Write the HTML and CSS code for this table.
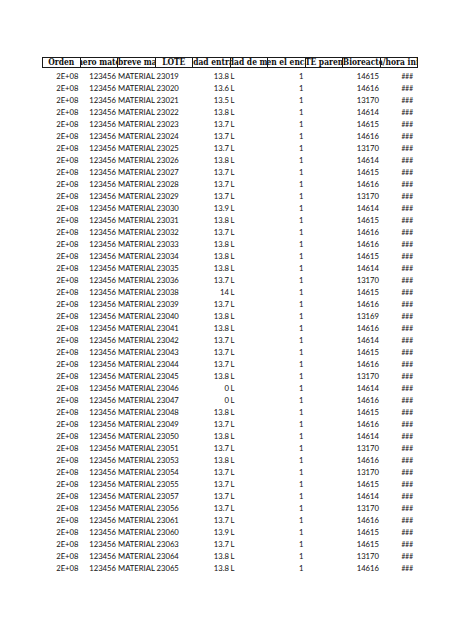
FILE: index.html
```html
<!DOCTYPE html>
<html lang="es">
<head>
<meta charset="utf-8">
<title>Lotes</title>
<link rel="stylesheet" href="styles.css">
</head>
<body>
<div class="sheet">
  <div class="head">
    <div class="hc"><span>Orden</span></div>
    <div class="hc"><span>Número material</span></div>
    <div class="hc"><span>Texto breve material</span></div>
    <div class="hc"><span>LOTE</span></div>
    <div class="hc"><span class="sl">Cantidad entrada</span></div>
    <div class="hc"><span class="sr1">Unidad de medida</span></div>
    <div class="hc"><span class="sl">Cantidad en el encabezado</span></div>
    <div class="hc"><span>LOTE parental</span></div>
    <div class="hc"><span class="sr">Bioreactor</span></div>
    <div class="hc"><span class="sl">Fecha/hora inicio</span></div>
  </div>
  <div class="body">
    <div class="row"><span class="r">2E+08</span><span class="r">123456</span><span class="l">MATERIAL</span><span class="lote">23019</span><span class="q">13.8</span><span class="u">L</span><span class="r">1</span><span></span><span class="b">14615</span><span class="h">###</span></div>
    <div class="row"><span class="r">2E+08</span><span class="r">123456</span><span class="l">MATERIAL</span><span class="lote">23020</span><span class="q">13.6</span><span class="u">L</span><span class="r">1</span><span></span><span class="b">14616</span><span class="h">###</span></div>
    <div class="row"><span class="r">2E+08</span><span class="r">123456</span><span class="l">MATERIAL</span><span class="lote">23021</span><span class="q">13.5</span><span class="u">L</span><span class="r">1</span><span></span><span class="b">13170</span><span class="h">###</span></div>
    <div class="row"><span class="r">2E+08</span><span class="r">123456</span><span class="l">MATERIAL</span><span class="lote">23022</span><span class="q">13.8</span><span class="u">L</span><span class="r">1</span><span></span><span class="b">14614</span><span class="h">###</span></div>
    <div class="row"><span class="r">2E+08</span><span class="r">123456</span><span class="l">MATERIAL</span><span class="lote">23023</span><span class="q">13.7</span><span class="u">L</span><span class="r">1</span><span></span><span class="b">14615</span><span class="h">###</span></div>
    <div class="row"><span class="r">2E+08</span><span class="r">123456</span><span class="l">MATERIAL</span><span class="lote">23024</span><span class="q">13.7</span><span class="u">L</span><span class="r">1</span><span></span><span class="b">14616</span><span class="h">###</span></div>
    <div class="row"><span class="r">2E+08</span><span class="r">123456</span><span class="l">MATERIAL</span><span class="lote">23025</span><span class="q">13.7</span><span class="u">L</span><span class="r">1</span><span></span><span class="b">13170</span><span class="h">###</span></div>
    <div class="row"><span class="r">2E+08</span><span class="r">123456</span><span class="l">MATERIAL</span><span class="lote">23026</span><span class="q">13.8</span><span class="u">L</span><span class="r">1</span><span></span><span class="b">14614</span><span class="h">###</span></div>
    <div class="row"><span class="r">2E+08</span><span class="r">123456</span><span class="l">MATERIAL</span><span class="lote">23027</span><span class="q">13.7</span><span class="u">L</span><span class="r">1</span><span></span><span class="b">14615</span><span class="h">###</span></div>
    <div class="row"><span class="r">2E+08</span><span class="r">123456</span><span class="l">MATERIAL</span><span class="lote">23028</span><span class="q">13.7</span><span class="u">L</span><span class="r">1</span><span></span><span class="b">14616</span><span class="h">###</span></div>
    <div class="row"><span class="r">2E+08</span><span class="r">123456</span><span class="l">MATERIAL</span><span class="lote">23029</span><span class="q">13.7</span><span class="u">L</span><span class="r">1</span><span></span><span class="b">13170</span><span class="h">###</span></div>
    <div class="row"><span class="r">2E+08</span><span class="r">123456</span><span class="l">MATERIAL</span><span class="lote">23030</span><span class="q">13.9</span><span class="u">L</span><span class="r">1</span><span></span><span class="b">14614</span><span class="h">###</span></div>
    <div class="row"><span class="r">2E+08</span><span class="r">123456</span><span class="l">MATERIAL</span><span class="lote">23031</span><span class="q">13.8</span><span class="u">L</span><span class="r">1</span><span></span><span class="b">14615</span><span class="h">###</span></div>
    <div class="row"><span class="r">2E+08</span><span class="r">123456</span><span class="l">MATERIAL</span><span class="lote">23032</span><span class="q">13.7</span><span class="u">L</span><span class="r">1</span><span></span><span class="b">14616</span><span class="h">###</span></div>
    <div class="row"><span class="r">2E+08</span><span class="r">123456</span><span class="l">MATERIAL</span><span class="lote">23033</span><span class="q">13.8</span><span class="u">L</span><span class="r">1</span><span></span><span class="b">14616</span><span class="h">###</span></div>
    <div class="row"><span class="r">2E+08</span><span class="r">123456</span><span class="l">MATERIAL</span><span class="lote">23034</span><span class="q">13.8</span><span class="u">L</span><span class="r">1</span><span></span><span class="b">14615</span><span class="h">###</span></div>
    <div class="row"><span class="r">2E+08</span><span class="r">123456</span><span class="l">MATERIAL</span><span class="lote">23035</span><span class="q">13.8</span><span class="u">L</span><span class="r">1</span><span></span><span class="b">14614</span><span class="h">###</span></div>
    <div class="row"><span class="r">2E+08</span><span class="r">123456</span><span class="l">MATERIAL</span><span class="lote">23036</span><span class="q">13.7</span><span class="u">L</span><span class="r">1</span><span></span><span class="b">13170</span><span class="h">###</span></div>
    <div class="row"><span class="r">2E+08</span><span class="r">123456</span><span class="l">MATERIAL</span><span class="lote">23038</span><span class="q">14</span><span class="u">L</span><span class="r">1</span><span></span><span class="b">14615</span><span class="h">###</span></div>
    <div class="row"><span class="r">2E+08</span><span class="r">123456</span><span class="l">MATERIAL</span><span class="lote">23039</span><span class="q">13.7</span><span class="u">L</span><span class="r">1</span><span></span><span class="b">14616</span><span class="h">###</span></div>
    <div class="row"><span class="r">2E+08</span><span class="r">123456</span><span class="l">MATERIAL</span><span class="lote">23040</span><span class="q">13.8</span><span class="u">L</span><span class="r">1</span><span></span><span class="b">13169</span><span class="h">###</span></div>
    <div class="row"><span class="r">2E+08</span><span class="r">123456</span><span class="l">MATERIAL</span><span class="lote">23041</span><span class="q">13.8</span><span class="u">L</span><span class="r">1</span><span></span><span class="b">14616</span><span class="h">###</span></div>
    <div class="row"><span class="r">2E+08</span><span class="r">123456</span><span class="l">MATERIAL</span><span class="lote">23042</span><span class="q">13.7</span><span class="u">L</span><span class="r">1</span><span></span><span class="b">14614</span><span class="h">###</span></div>
    <div class="row"><span class="r">2E+08</span><span class="r">123456</span><span class="l">MATERIAL</span><span class="lote">23043</span><span class="q">13.7</span><span class="u">L</span><span class="r">1</span><span></span><span class="b">14615</span><span class="h">###</span></div>
    <div class="row"><span class="r">2E+08</span><span class="r">123456</span><span class="l">MATERIAL</span><span class="lote">23044</span><span class="q">13.7</span><span class="u">L</span><span class="r">1</span><span></span><span class="b">14616</span><span class="h">###</span></div>
    <div class="row"><span class="r">2E+08</span><span class="r">123456</span><span class="l">MATERIAL</span><span class="lote">23045</span><span class="q">13.8</span><span class="u">L</span><span class="r">1</span><span></span><span class="b">13170</span><span class="h">###</span></div>
    <div class="row"><span class="r">2E+08</span><span class="r">123456</span><span class="l">MATERIAL</span><span class="lote">23046</span><span class="q">0</span><span class="u">L</span><span class="r">1</span><span></span><span class="b">14614</span><span class="h">###</span></div>
    <div class="row"><span class="r">2E+08</span><span class="r">123456</span><span class="l">MATERIAL</span><span class="lote">23047</span><span class="q">0</span><span class="u">L</span><span class="r">1</span><span></span><span class="b">14616</span><span class="h">###</span></div>
    <div class="row"><span class="r">2E+08</span><span class="r">123456</span><span class="l">MATERIAL</span><span class="lote">23048</span><span class="q">13.8</span><span class="u">L</span><span class="r">1</span><span></span><span class="b">14615</span><span class="h">###</span></div>
    <div class="row"><span class="r">2E+08</span><span class="r">123456</span><span class="l">MATERIAL</span><span class="lote">23049</span><span class="q">13.7</span><span class="u">L</span><span class="r">1</span><span></span><span class="b">14616</span><span class="h">###</span></div>
    <div class="row"><span class="r">2E+08</span><span class="r">123456</span><span class="l">MATERIAL</span><span class="lote">23050</span><span class="q">13.8</span><span class="u">L</span><span class="r">1</span><span></span><span class="b">14614</span><span class="h">###</span></div>
    <div class="row"><span class="r">2E+08</span><span class="r">123456</span><span class="l">MATERIAL</span><span class="lote">23051</span><span class="q">13.7</span><span class="u">L</span><span class="r">1</span><span></span><span class="b">13170</span><span class="h">###</span></div>
    <div class="row"><span class="r">2E+08</span><span class="r">123456</span><span class="l">MATERIAL</span><span class="lote">23053</span><span class="q">13.8</span><span class="u">L</span><span class="r">1</span><span></span><span class="b">14616</span><span class="h">###</span></div>
    <div class="row"><span class="r">2E+08</span><span class="r">123456</span><span class="l">MATERIAL</span><span class="lote">23054</span><span class="q">13.7</span><span class="u">L</span><span class="r">1</span><span></span><span class="b">13170</span><span class="h">###</span></div>
    <div class="row"><span class="r">2E+08</span><span class="r">123456</span><span class="l">MATERIAL</span><span class="lote">23055</span><span class="q">13.7</span><span class="u">L</span><span class="r">1</span><span></span><span class="b">14615</span><span class="h">###</span></div>
    <div class="row"><span class="r">2E+08</span><span class="r">123456</span><span class="l">MATERIAL</span><span class="lote">23057</span><span class="q">13.7</span><span class="u">L</span><span class="r">1</span><span></span><span class="b">14614</span><span class="h">###</span></div>
    <div class="row"><span class="r">2E+08</span><span class="r">123456</span><span class="l">MATERIAL</span><span class="lote">23056</span><span class="q">13.7</span><span class="u">L</span><span class="r">1</span><span></span><span class="b">13170</span><span class="h">###</span></div>
    <div class="row"><span class="r">2E+08</span><span class="r">123456</span><span class="l">MATERIAL</span><span class="lote">23061</span><span class="q">13.7</span><span class="u">L</span><span class="r">1</span><span></span><span class="b">14616</span><span class="h">###</span></div>
    <div class="row"><span class="r">2E+08</span><span class="r">123456</span><span class="l">MATERIAL</span><span class="lote">23060</span><span class="q">13.9</span><span class="u">L</span><span class="r">1</span><span></span><span class="b">14615</span><span class="h">###</span></div>
    <div class="row"><span class="r">2E+08</span><span class="r">123456</span><span class="l">MATERIAL</span><span class="lote">23063</span><span class="q">13.7</span><span class="u">L</span><span class="r">1</span><span></span><span class="b">14615</span><span class="h">###</span></div>
    <div class="row"><span class="r">2E+08</span><span class="r">123456</span><span class="l">MATERIAL</span><span class="lote">23064</span><span class="q">13.8</span><span class="u">L</span><span class="r">1</span><span></span><span class="b">13170</span><span class="h">###</span></div>
    <div class="row"><span class="r">2E+08</span><span class="r">123456</span><span class="l">MATERIAL</span><span class="lote">23065</span><span class="q">13.8</span><span class="u">L</span><span class="r">1</span><span></span><span class="b">14616</span><span class="h">###</span></div>
  </div>
</div>
</body>
</html>
```

FILE: styles.css
```css
html, body {
  margin: 0;
  padding: 0;
  background: #ffffff;
}

.sheet {
  padding: 57px 0 0 42px;
  width: 376px;
}

.head {
  display: grid;
  grid-template-columns: repeat(10, 37.5px);
  height: 11px;
  border-top: 1px solid #1a1a1a;
  border-bottom: 1px solid #1a1a1a;
  border-left: 1px solid #1a1a1a;
  box-sizing: border-box;
}

.hc {
  display: flex;
  justify-content: center;
  align-items: center;
  overflow: hidden;
  white-space: nowrap;
  border-right: 1px solid #1a1a1a;
  font-family: "DejaVu Serif Condensed", "DejaVu Serif", serif;
  font-stretch: condensed;
  font-weight: bold;
  font-size: 8.4px;
  line-height: 9px;
  color: #111;
}

.hc span {
  flex: none;
}

.hc .sl {
  padding-right: 8px;
}

.hc .sr {
  padding-left: 8px;
}

.hc .sr1 {
  padding-left: 7px;
}

.body {
  padding-top: 2px;
}

.row {
  display: grid;
  grid-template-columns: repeat(10, 37.5px);
  height: 12px;
  line-height: 12px;
  font-family: Lato, "Liberation Sans", sans-serif;
  font-size: 7.7px;
  color: #111;
  white-space: nowrap;
}

.row span {
  overflow: visible;
}

.r {
  text-align: right;
  padding-right: 1px;
}

.l {
  text-align: left;
  padding-left: 1px;
}

.lote {
  text-align: left;
  padding-left: 2px;
}

.q {
  text-align: right;
  padding-right: 0.5px;
}

.u {
  text-align: left;
  padding-left: 1px;
}

.b {
  text-align: right;
  padding-right: 0.5px;
}

.h {
  text-align: right;
  padding-right: 4px;
  font-size: 6.6px;
}
```
